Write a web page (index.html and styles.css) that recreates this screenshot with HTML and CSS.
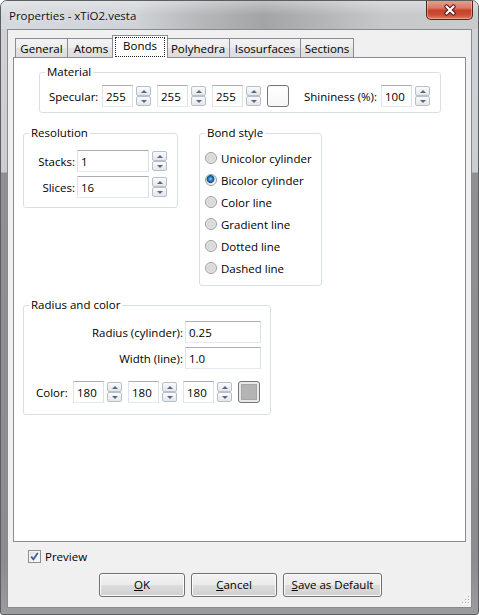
FILE: index.html
```html
<!DOCTYPE html>
<html>
<head>
<meta charset="utf-8">
<link rel="stylesheet" href="styles.css">
</head>
<body>
<div class="window">
  <div class="titlebar">
    <span class="title">Properties - xTiO2.vesta</span>
    <div class="close">
      <svg width="14" height="12" viewBox="0 0 14 12"><path d="M3.5 2.5 L10.5 9.5 M10.5 2.5 L3.5 9.5" stroke="#4a1a12" stroke-width="4.2" stroke-linecap="round"/><path d="M3.5 2.5 L10.5 9.5 M10.5 2.5 L3.5 9.5" stroke="#fff" stroke-width="2.2" stroke-linecap="round"/></svg>
    </div>
  </div>
  <div class="client">
    <div class="tabs">
      <div class="tab t-general">General</div>
      <div class="tab t-atoms">Atoms</div>
      <div class="tab active t-bonds"><span class="focus">Bonds</span></div>
      <div class="tab t-poly">Polyhedra</div>
      <div class="tab t-iso">Isosurfaces</div>
      <div class="tab t-sec">Sections</div>
    </div>
    <div class="pane">
      <fieldset class="group g-material">
        <legend>Material</legend>
        <div class="inner mat-inner">
          <span class="lbl spec-lbl">Specular:</span>
          <div class="nums">
            <div class="field"><div class="tb num">255</div><div class="spin"><span class="up"></span><span class="down"></span></div></div>
            <div class="field"><div class="tb num">255</div><div class="spin"><span class="up"></span><span class="down"></span></div></div>
            <div class="field"><div class="tb num">255</div><div class="spin"><span class="up"></span><span class="down"></span></div></div>
            <div class="swatch sw-white"></div>
          </div>
          <span class="lbl shin-lbl">Shininess (%):</span>
          <div class="field"><div class="tb num">100</div><div class="spin"><span class="up"></span><span class="down"></span></div></div>
        </div>
      </fieldset>

      <div class="row2">
        <fieldset class="group g-res">
          <legend>Resolution</legend>
          <div class="inner res-inner">
            <div class="frow"><span class="lbl res-lbl">Stacks:</span><div class="field"><div class="tb res-tb">1</div><div class="spin"><span class="up"></span><span class="down"></span></div></div></div>
            <div class="frow"><span class="lbl res-lbl">Slices:</span><div class="field"><div class="tb res-tb">16</div><div class="spin"><span class="up"></span><span class="down"></span></div></div></div>
          </div>
        </fieldset>
        <fieldset class="group g-bond">
          <legend>Bond style</legend>
          <div class="inner bond-inner">
            <div class="radio-row"><span class="radio"></span>Unicolor cylinder</div>
            <div class="radio-row"><span class="radio checked"></span>Bicolor cylinder</div>
            <div class="radio-row"><span class="radio"></span>Color line</div>
            <div class="radio-row"><span class="radio"></span>Gradient line</div>
            <div class="radio-row"><span class="radio"></span>Dotted line</div>
            <div class="radio-row"><span class="radio"></span>Dashed line</div>
          </div>
        </fieldset>
      </div>

      <fieldset class="group g-rad">
        <legend>Radius and color</legend>
        <div class="inner rad-inner">
          <div class="frow"><span class="lbl rad-lbl">Radius (cylinder):</span><div class="tb rad-tb">0.25</div></div>
          <div class="frow"><span class="lbl rad-lbl">Width (line):</span><div class="tb rad-tb">1.0</div></div>
          <div class="frow color-row">
            <span class="lbl color-lbl">Color:</span>
            <div class="nums">
              <div class="field"><div class="tb num">180</div><div class="spin"><span class="up"></span><span class="down"></span></div></div>
              <div class="field"><div class="tb num">180</div><div class="spin"><span class="up"></span><span class="down"></span></div></div>
              <div class="field"><div class="tb num">180</div><div class="spin"><span class="up"></span><span class="down"></span></div></div>
              <div class="swatch sw-gray"><span class="sw-fill"></span></div>
            </div>
          </div>
        </div>
      </fieldset>
    </div>

    <div class="preview">
      <span class="check"><svg width="9" height="9" viewBox="0 0 9 9"><path d="M1.2 4.6 L3.4 7.3 L7.8 0.9" fill="none" stroke="#3d5a9c" stroke-width="1.7"/></svg></span>
      <span>Preview</span>
    </div>

    <div class="buttons">
      <div class="btn btn-ok"><span><u>O</u>K</span></div>
      <div class="btn btn-cancel"><span><u>C</u>ancel</span></div>
      <div class="btn btn-save"><span><u>S</u>ave as Default</span></div>
    </div>

    <div class="grip">
      <svg width="10" height="10" viewBox="0 0 10 10">
        <rect x="8" y="0" width="1" height="1" fill="#b0b0b0"/>
        <rect x="5" y="3" width="1" height="1" fill="#b0b0b0"/><rect x="8" y="3" width="1" height="1" fill="#b0b0b0"/>
        <rect x="2" y="6" width="1" height="1" fill="#b0b0b0"/><rect x="5" y="6" width="1" height="1" fill="#b0b0b0"/><rect x="8" y="6" width="1" height="1" fill="#b0b0b0"/>
        <rect x="9" y="1" width="1" height="1" fill="#fff"/>
        <rect x="6" y="4" width="1" height="1" fill="#fff"/><rect x="9" y="4" width="1" height="1" fill="#fff"/>
        <rect x="3" y="7" width="1" height="1" fill="#fff"/><rect x="6" y="7" width="1" height="1" fill="#fff"/><rect x="9" y="7" width="1" height="1" fill="#fff"/>
      </svg>
    </div>
  </div>
</div>
</body>
</html>
```

FILE: styles.css
```css
html, body {
  margin: 0;
  padding: 0;
  background: #ffffff;
}

body {
  font-family: "Open Sans", "Noto Sans", "DejaVu Sans", sans-serif;
  font-size: 11.5px;
  color: #000;
}

.window {
  width: 479px;
  height: 615px;
  box-sizing: border-box;
  border: 1px solid #5b5f64;
  border-radius: 7px 7px 3px 3px;
  background: linear-gradient(to bottom, #cfd3d7 0px, #cbced1 171px, #8e9092 172px, #8a8c8e 560px, #9a9c9e 100%);
  display: flex;
  flex-direction: column;
  overflow: hidden;
}

.titlebar {
  height: 28px;
  flex: none;
  display: flex;
  justify-content: space-between;
  background:
    linear-gradient(to bottom, rgba(255,255,255,0.35) 0, rgba(255,255,255,0) 14px),
    linear-gradient(90deg, #d5dade 0%, #cfd3d7 28%, #b5b7b9 42%, #a2a4a6 55%, #b1b3b5 66%, #c6c8ca 80%, #c9cbcd 100%);
}

.title {
  align-self: center;
  padding-left: 8px;
  color: #101010;
  text-shadow: 0 0 6px rgba(255,255,255,0.9);
  margin-top: 1px;
}

.close {
  width: 47px;
  height: 20px;
  margin-top: -1px;
  margin-right: 5px;
  box-sizing: border-box;
  border: 1px solid #5a2318;
  border-top: none;
  border-radius: 0 0 5px 5px;
  background: linear-gradient(to bottom, #e7a595 0%, #d97c67 40%, #c7432c 55%, #c94a32 75%, #e27a5e 100%);
  box-shadow: inset 0 0 0 1px rgba(255,210,200,0.45);
  display: flex;
  align-items: center;
  justify-content: center;
}

.client {
  flex: 1;
  margin: 0 6px 6px 6px;
  background: #f0f0f0;
  border: 1px solid #8a8a8a;
  position: relative;
  padding-top: 5px;
  box-sizing: border-box;
}

/* Tabs */
.tabs {
  display: flex;
  align-items: flex-end;
  height: 22px;
  padding-left: 7px;
}

.tab {
  height: 19px;
  box-sizing: border-box;
  border: 1px solid #898c95;
  border-bottom: none;
  margin-left: -1px;
  background: linear-gradient(to bottom, #f3f3f3 0%, #ececec 50%, #e3e3e3 51%, #dddddd 100%);
  display: flex;
  align-items: center;
  justify-content: center;
  padding-top: 1px;
}

.t-general { width: 53px; margin-left: 0; }
.t-atoms { width: 48px; }
.t-poly { width: 64px; }
.t-iso { width: 72px; }
.t-sec { width: 54px; }

.tab.active {
  width: 56px;
  height: 23px;
  margin-left: -3px;
  margin-right: -1px;
  margin-bottom: -1px;
  background: #ffffff;
  position: relative;
  z-index: 2;
  padding: 1px 2px 0 2px;
  align-items: stretch;
}

.focus {
  flex: 1;
  border: 1px dotted #222;
  display: flex;
  align-items: center;
  justify-content: center;
  padding-bottom: 4px;
  margin-bottom: 1px;
}

/* Pane */
.pane {
  margin-left: 5px;
  width: 453px;
  height: 485px;
  box-sizing: border-box;
  border: 1px solid #898c95;
  background: #ffffff;
  position: relative;
  z-index: 1;
  overflow: hidden;
}

fieldset.group {
  margin: 0;
  padding: 0;
  border: 1px solid #d5dfe5;
  border-radius: 3px;
  box-sizing: border-box;
  min-width: 0;
  box-shadow: inset 1px 1px 0 #ffffff;
}

fieldset.group legend {
  padding: 0 2px;
  margin-left: 5px;
  height: 16px;
  line-height: 16px;
  color: #000;
}

.g-material {
  width: 402px;
  margin-top: 6px !important;
  margin-left: 25px !important;
}

.g-material legend { margin-left: 6px; }

.inner {
  display: flex;
}

.mat-inner {
  padding: 5px 0 5px 9px;
  align-items: center;
  height: 22px;
}

.lbl {
  white-space: nowrap;
}

.spec-lbl { width: 53px; }
.shin-lbl { width: 77px; margin-left: 15px; }

.nums {
  display: flex;
  gap: 6px;
  align-items: center;
}

.field {
  display: flex;
  gap: 3px;
}

.tb {
  height: 22px;
  box-sizing: border-box;
  border: 1px solid;
  border-color: #abadb3 #dbdfe6 #e3e9ef #e2e3ea;
  background: #ffffff;
  padding-left: 3px;
  display: flex;
  align-items: center;
  white-space: nowrap;
}

.num { width: 31px; }

.spin {
  width: 15px;
  height: 22px;
  display: flex;
  flex-direction: column;
  justify-content: space-between;
  padding: 1px 0;
  box-sizing: border-box;
}

.spin span {
  height: 10px;
  box-sizing: border-box;
  border: 1px solid #b9bfc9;
  border-radius: 2px;
  background: linear-gradient(to bottom, #fbfbfb 0%, #f0f0f0 50%, #e4e6e9 100%);
  display: flex;
  align-items: center;
  justify-content: center;
}

.spin .up::before {
  content: "";
  border-left: 3px solid transparent;
  border-right: 3px solid transparent;
  border-bottom: 3px solid #56688a;
}

.spin .down::before {
  content: "";
  border-left: 3px solid transparent;
  border-right: 3px solid transparent;
  border-top: 3px solid #56688a;
}

.swatch {
  width: 22px;
  height: 22px;
  box-sizing: border-box;
  border: 1px solid #767676;
  border-radius: 3px;
}

.sw-white {
  background: linear-gradient(to bottom, #ffffff 0%, #f6f6f6 100%);
  box-shadow: inset 0 0 0 1px #fafafa;
}

.sw-gray {
  background: #e9e9e9;
  padding: 2px;
  display: flex;
}

.sw-fill {
  flex: 1;
  background: #b4b4b4;
  border: 1px solid #a6a6a6;
}

/* second row */
.row2 {
  display: flex;
  align-items: flex-start;
  margin-top: 12px;
}

.g-res {
  width: 155px;
  margin-left: 9px !important;
}

.res-inner {
  flex-direction: column;
  gap: 4px;
  padding: 9px 0 9px 0;
}

.frow {
  display: flex;
  align-items: center;
  height: 22px;
}

.res-lbl {
  width: 51px;
  text-align: right;
  margin-right: 2px;
}

.res-tb { width: 72px; }

.g-bond {
  width: 123px;
  margin-left: 21px !important;
}

.bond-inner {
  flex-direction: column;
  padding: 6px 0 6px 5px;
}

.radio-row {
  height: 22px;
  display: flex;
  align-items: center;
  gap: 4px;
  white-space: nowrap;
}

.radio {
  width: 12px;
  height: 12px;
  box-sizing: border-box;
  border-radius: 50%;
  border: 1px solid #9a9b9c;
  background: radial-gradient(circle at 50% 50%, #e2e2e2 0, #d6d6d6 3px, #ececec 5px, #f8f8f8 6px);
  flex: none;
}

.radio.checked {
  background: radial-gradient(circle at 45% 40%, #8fd0ff 0, #3a8ed6 1.5px, #1b5d9e 3px, #17477a 3.6px, #dcdcdc 4.2px, #eeeeee 5px, #f8f8f8 6px);
}

.g-rad {
  width: 248px;
  margin-top: 11px !important;
  margin-left: 9px !important;
}

.rad-inner {
  flex-direction: column;
  padding: 8px 0 11px 0;
  gap: 4px;
}

.rad-lbl {
  width: 159px;
  text-align: right;
  margin-right: 2px;
}

.rad-tb { width: 76px; }

.color-row {
  margin-top: 8px;
  padding-left: 12px;
}

.color-lbl { width: 37px; }

/* bottom */
.preview {
  display: flex;
  align-items: center;
  gap: 4px;
  height: 14px;
  margin-top: 7px;
  padding-left: 20px;
}

.check {
  width: 13px;
  height: 13px;
  box-sizing: border-box;
  border: 1px solid #8e8f8f;
  background: linear-gradient(135deg, #dcdfe3 0%, #f2f3f5 60%, #ffffff 100%);
  box-shadow: inset 0 0 0 1px #f4f4f4;
  display: flex;
  align-items: center;
  justify-content: center;
}

.buttons {
  display: flex;
  gap: 6px;
  margin-top: 10px;
  padding-left: 91px;
}

.btn {
  height: 24px;
  box-sizing: border-box;
  border: 1px solid #707070;
  border-radius: 3px;
  background: linear-gradient(to bottom, #f2f2f2 0%, #ebebeb 49%, #dddddd 50%, #cfcfcf 100%);
  box-shadow: inset 0 0 0 1px #fcfcfc;
  display: flex;
  align-items: center;
  justify-content: center;
  padding-bottom: 1px;
}

.btn-ok { width: 86px; }
.btn-cancel { width: 86px; }
.btn-save { width: 99px; }

.grip {
  position: absolute;
  right: 1px;
  bottom: 1px;
  width: 10px;
  height: 10px;
  line-height: 0;
}
```
